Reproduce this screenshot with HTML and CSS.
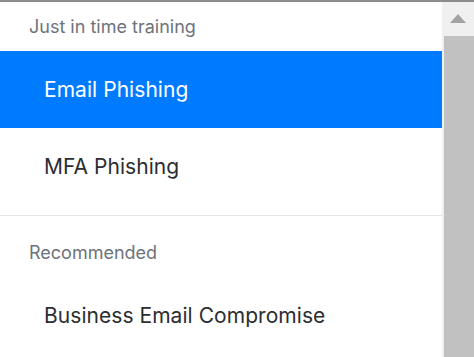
FILE: index.html
```html
<!DOCTYPE html>
<html>
<head>
<meta charset="utf-8">
<link rel="stylesheet" href="styles.css">
</head>
<body>
<div class="frame">
  <div class="list">
    <div class="group first">
      <div class="group-title">Just in time training</div>
      <div class="item active">Email Phishing</div>
      <div class="item">MFA Phishing</div>
    </div>
    <div class="group">
      <div class="group-title">Recommended</div>
      <div class="item">Business Email Compromise</div>
    </div>
  </div>
  <div class="scrollbar">
    <div class="arrow-btn"><span class="arrow"></span></div>
    <div class="thumb"></div>
  </div>
</div>
</body>
</html>
```
FILE: styles.css
```css
html, body {
  margin: 0;
  padding: 0;
  background: #ffffff;
}
body {
  font-family: "Inter", "Liberation Sans", sans-serif;
  overflow: hidden;
}
.frame {
  display: flex;
  height: 357px;
  border-top: 2px solid #8c8c8c;
  box-sizing: border-box;
}
.list {
  flex: 1;
  overflow: hidden;
}
.group {
  padding-top: 12px;
}
.group.first {
  padding-top: 0;
  padding-bottom: 10px;
  border-bottom: 1px solid #e6e6e6;
}
.group-title {
  height: 49px;
  display: flex;
  align-items: center;
  padding-left: 29px;
  font-size: 18px;
  color: #6e737b;
}
.item {
  height: 77px;
  display: flex;
  align-items: center;
  padding-left: 44px;
  font-size: 21px;
  color: #2b2d31;
  letter-spacing: 0.05px;
}
.item.active {
  background: #007bff;
  color: #ffffff;
}
.scrollbar {
  width: 32px;
  background: #f0f0f0;
  display: flex;
  flex-direction: column;
}
.arrow-btn {
  height: 34px;
  display: flex;
  align-items: center;
  justify-content: center;
}
.arrow {
  width: 0;
  height: 0;
  border-left: 8px solid transparent;
  border-right: 8px solid transparent;
  border-bottom: 9px solid #a3a3a3;
  margin-bottom: 2px;
}
.thumb {
  flex: 1;
  margin-left: 2px;
  background: #c1c1c1;
}
```
